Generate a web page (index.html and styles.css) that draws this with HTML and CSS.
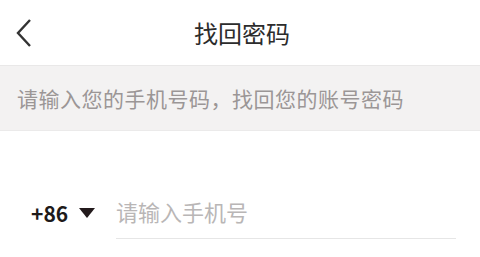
FILE: index.html
```html
<!DOCTYPE html>
<html lang="zh-CN">
<head>
  <meta charset="UTF-8">
  <meta name="viewport" content="width=device-width, initial-scale=1.0">
  <title>找回密码</title>
  <link rel="stylesheet" href="styles.css">
</head>
<body>
  <!-- Header -->
  <header class="top-bar">
    <a href="#" class="back-link" aria-label="返回">
      <svg width="18" height="30" viewBox="0 0 18 30">
        <polyline points="15,2 3,15 15,28" fill="none" stroke="#333" stroke-width="2.4" stroke-linejoin="miter"/>
      </svg>
    </a>
    <h1 class="page-title">找回密码</h1>
    <span class="top-spacer"></span>
  </header>

  <div class="tip-band">请输入您的手机号码，找回您的账号密码</div>

  <!-- Phone form -->
  <form class="phone-form">
    <div class="phone-row">
      <button type="button" class="area-code">
        <span>+86</span>
        <span class="caret"></span>
      </button>
      <input type="tel" class="phone-input" placeholder="请输入手机号">
    </div>
  </form>
</body>
</html>
```

FILE: styles.css
```css
/* Reset and base styles */
* {
  margin: 0;
  padding: 0;
  box-sizing: border-box;
  font-family: "Noto Sans CJK SC", "Noto Sans", sans-serif;
}

body {
  background-color: #fff;
  color: #333;
  width: 480px;
  overflow: hidden;
}

/* Header styles */
.top-bar {
  display: grid;
  grid-template-columns: 1fr auto 1fr;
  align-items: center;
  height: 65px;
  padding: 0 15px;
}

.back-link {
  display: flex;
  align-items: center;
  width: 20px;
  height: 30px;
}

.page-title {
  font-size: 24px;
  font-weight: 400;
  color: #2c2c2c;
  line-height: 1;
  margin-left: 4px;
}

/* Grey tip band */
.tip-band {
  height: 66px;
  display: flex;
  align-items: center;
  padding-left: 17px;
  background-color: #f3f2f2;
  border-top: 1px solid #e9e8e8;
  border-bottom: 1px solid #ebeaea;
  font-size: 21px;
  color: #9b9696;
  letter-spacing: 0.5px;
}

/* Phone input row */
.phone-form {
  padding: 62px 24px 0 31px;
}

.phone-row {
  display: flex;
  align-items: flex-start;
}

.area-code {
  display: flex;
  align-items: center;
  background: none;
  border: none;
  font-family: "Open Sans", "Noto Sans", sans-serif;
  font-size: 21px;
  font-weight: 600;
  color: #1e1a1a;
  width: 85px;
  height: 40px;
}

.caret {
  width: 0;
  height: 0;
  margin-left: 11px;
  border-left: 8.5px solid transparent;
  border-right: 8.5px solid transparent;
  border-top: 10px solid #231a1c;
}

.phone-input {
  flex: 1;
  height: 46px;
  border: none;
  border-bottom: 1px solid #e6e6e6;
  outline: none;
  font-size: 22px;
  color: #333;
  background: none;
  padding-bottom: 10px;
}

.phone-input::placeholder {
  color: #b9b6b6;
}
```
